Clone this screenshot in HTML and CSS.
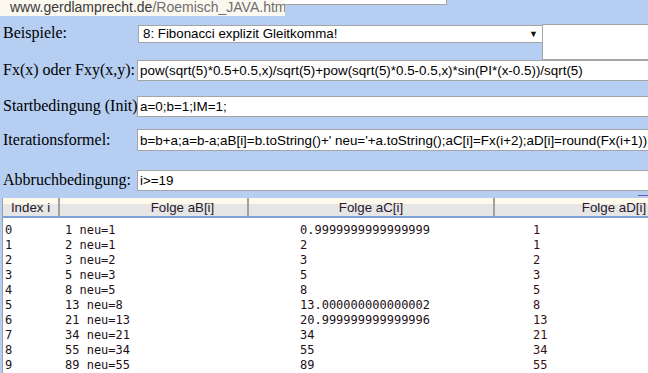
FILE: index.html
```html
<!DOCTYPE html>
<html lang="de">
<head>
    <meta charset="UTF-8">
    <title>Iterationsrechner</title>
    <link rel="stylesheet" href="styles.css">
</head>
<body>

<div class="page">
    <div class="topbar">
        <div class="url"><span class="host">www.gerdlamprecht.de</span><span class="path">/Roemisch_JAVA.htm</span></div>
        <div class="stub"></div>
    </div>

    <div class="row row-pick">
        <div class="pick">
            <label class="lbl">Beispiele:</label>
            <div class="select"><span>8: Fibonacci explizit Gleitkomma!</span><span class="arrow">▼</span></div>
        </div>
        <div class="side"></div>
    </div>

    <div class="row row-fx">
        <label class="lbl">Fx(x) oder Fxy(x,y):</label>
        <input class="field" type="text" value="pow(sqrt(5)*0.5+0.5,x)/sqrt(5)+pow(sqrt(5)*0.5-0.5,x)*sin(PI*(x-0.5))/sqrt(5)">
    </div>
    <div class="row row-init">
        <label class="lbl">Startbedingung (Init)</label>
        <input class="field" type="text" value="a=0;b=1;IM=1;">
    </div>
    <div class="row row-iter">
        <label class="lbl">Iterationsformel:</label>
        <input class="field" type="text" value="b=b+a;a=b-a;aB[i]=b.toString()+' neu='+a.toString();aC[i]=Fx(i+2);aD[i]=round(Fx(i+1));">
    </div>
    <div class="row row-stop">
        <label class="lbl">Abbruchbedingung:</label>
        <input class="field" type="text" value="i>=19">
    </div>

    <div class="gap"><span class="mark"></span></div>

    <div class="grid">
        <div class="head">
            <div class="hcell c-idx">Index i</div>
            <div class="hcell c-b">Folge aB[i]</div>
            <div class="hcell c-c">Folge aC[i]</div>
            <div class="hcell c-d">Folge aD[i]</div>
        </div>
        <div class="body" id="rows"></div>
    </div>
</div>

<script>
    const data = [
        ['0', '1 neu=1', '0.9999999999999999', '1'],
        ['1', '2 neu=1', '2', '1'],
        ['2', '3 neu=2', '3', '2'],
        ['3', '5 neu=3', '5', '3'],
        ['4', '8 neu=5', '8', '5'],
        ['5', '13 neu=8', '13.000000000000002', '8'],
        ['6', '21 neu=13', '20.999999999999996', '13'],
        ['7', '34 neu=21', '34', '21'],
        ['8', '55 neu=34', '55', '34'],
        ['9', '89 neu=55', '89', '55']
    ];

    const rows = document.getElementById('rows');
    data.forEach((r) => {
        const line = document.createElement('div');
        line.className = 'line';
        r.forEach((v) => {
            const cell = document.createElement('span');
            cell.textContent = v;
            line.appendChild(cell);
        });
        rows.appendChild(line);
    });
</script>

</body>
</html>
```

FILE: styles.css
```css
body {
    margin: 0;
    background-color: #b5cef2;
    font-family: "Liberation Serif", serif;
    overflow: hidden;
}
.page {
    width: 648px;
    height: 373px;
    overflow: hidden;
}
.topbar {
    display: flex;
    height: 24px;
}
.url {
    width: 275px;
    height: 16px;
    padding-left: 10px;
    background-color: #fbf8ef;
    font-family: "Liberation Sans", sans-serif;
    font-size: 14px;
    line-height: 15px;
    white-space: nowrap;
    overflow: hidden;
}
.url .host {
    color: #3a3a3a;
}
.url .path {
    color: #6e6e6e;
}
.stub {
    width: 161px;
    height: 4px;
    background-color: #fff;
    border-right: 1px solid #a5a5a5;
    border-bottom: 1px solid #a5a5a5;
}
.row {
    display: flex;
}
.lbl {
    min-width: 134px;
    padding-left: 3px;
    font-size: 16px;
    color: #000;
    white-space: nowrap;
}
.row-pick {
    height: 36px;
    align-items: flex-start;
}
.pick {
    display: flex;
    align-items: baseline;
}
.pick .lbl {
    min-width: 135px;
}
.select {
    width: 395px;
    height: 16px;
    display: flex;
    justify-content: space-between;
    padding: 0 4px 0 4px;
    background-color: #fff;
    border: 1px solid #a5a5a5;
    font-family: "Liberation Sans", sans-serif;
    font-size: 13.3px;
    line-height: 16px;
    color: #000;
}
.select .arrow {
    font-size: 9px;
    color: #111;
}
.side {
    flex: 1;
    height: 34px;
    margin-left: -1px;
    background-color: #fff;
    border: 1px solid #a5a5a5;
    border-right: none;
}
.row-fx,
.row-init,
.row-iter,
.row-stop {
    align-items: baseline;
}
.field {
    flex: 0 0 520px;
    height: 21px;
    box-sizing: border-box;
    margin: 0;
    padding: 0 2px;
    border: 1px solid #a5a5a5;
    background-color: #fff;
    font-family: "Liberation Sans", sans-serif;
    font-size: 13.4px;
    color: #000;
    outline: none;
}
.row-fx {
    margin-bottom: 15px;
}
.row-init {
    margin-bottom: 12px;
}
.row-iter {
    margin-bottom: 19px;
}
.row-iter .field {
    height: 22px;
}
.gap {
    height: 7px;
    display: flex;
    justify-content: flex-end;
}
.mark {
    width: 10px;
    height: 1px;
    margin-top: 4px;
    background-color: #6a5aa8;
}
.grid {
    margin-left: 2px;
    border-left: 1px solid #a0a0a0;
    background-color: #fff;
    height: 200px;
}
.head {
    display: flex;
    height: 18px;
    border-bottom: 2px solid #7fa2d6;
    background: linear-gradient(#fff9ec 0, #fff9ec 6px, #e6e6e6 6px);
    font-family: "Liberation Sans", sans-serif;
    font-size: 13.3px;
    line-height: 19px;
    color: #2a1a2a;
    white-space: nowrap;
}
.hcell {
    text-align: center;
    border-right: 2px solid #a0a0a0;
    flex-shrink: 0;
}
.c-idx {
    width: 55px;
}
.c-b {
    width: 129px;
    padding-left: 58px;
}
.c-c {
    width: 244px;
}
.c-d {
    width: 238px;
    border-right: none;
}
.body {
    padding: 5px 0 0 2px;
    font-family: "DejaVu Sans Mono", monospace;
    font-size: 12px;
    line-height: 15px;
    color: #221018;
}
.line {
    display: grid;
    grid-template-columns: 60px 235px 233px 1fr;
    white-space: pre;
}
.line span:last-child {
    color: #3a1010;
}
```
